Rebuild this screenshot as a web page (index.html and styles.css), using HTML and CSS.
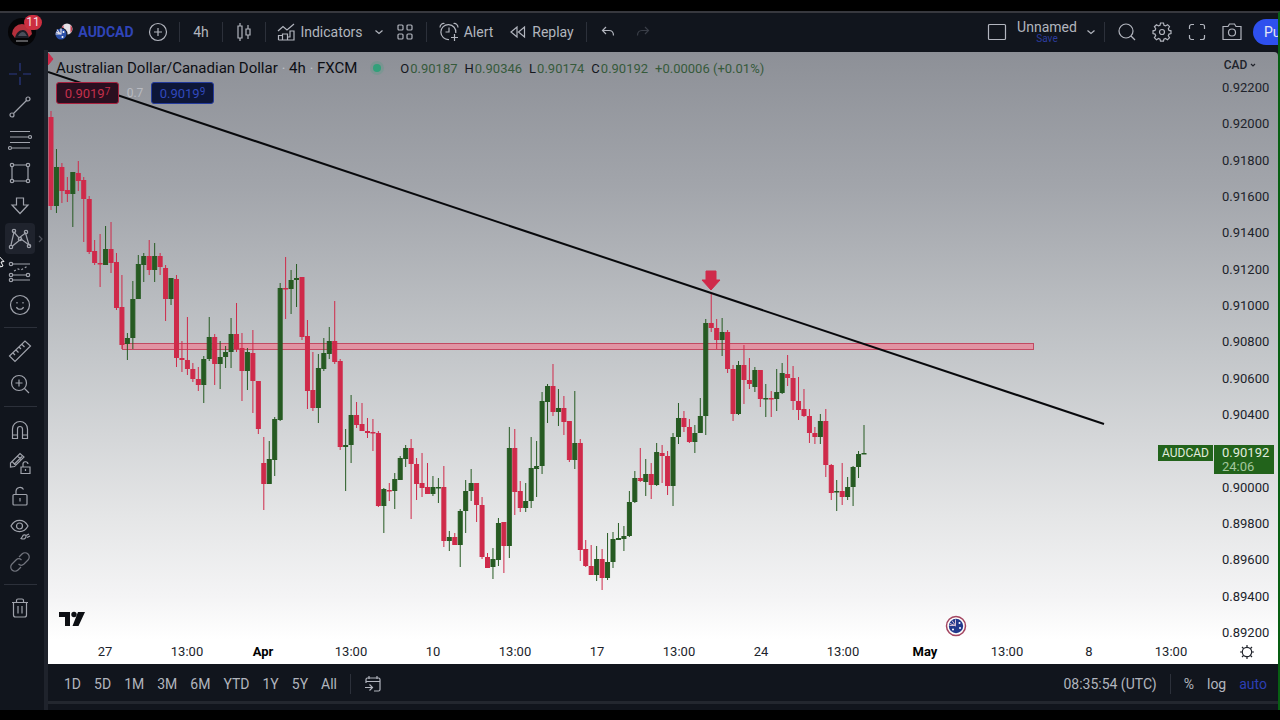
FILE: index.html
```html
<!DOCTYPE html>
<html lang="en">
<head>
    <meta charset="UTF-8">
    <meta name="viewport" content="width=device-width, initial-scale=1.0">
    <title>AUDCAD 0.90192 - Unnamed</title>
    <link rel="stylesheet" href="styles.css">
</head>
<body>
    <div class="app">
        <header class="topbar">
            <button class="avatar" aria-label="Account">
                <svg width="30" height="30" viewBox="0 0 30 30">
                    <circle cx="15" cy="15" r="14" fill="#050507"/>
                    <path d="M5 17a10 10 0 0 1 20 0l-4 4H8z" fill="#b5303c"/>
                    <path d="M8 21c1-5 4-8 8-8 3 0 5 3 6 8z" fill="#1b1d26"/>
                    <path d="M11 19c2-4 5-5 7-3l2 3z" fill="#4a4e5a"/>
                    <path d="M9 24h12" stroke="#a9a9ad" stroke-width="1"/>
                </svg>
                <span class="badge">11</span>
            </button>
            <button class="symbol">
                <svg width="20" height="20" viewBox="0 0 20 20">
                    <circle cx="13" cy="7" r="5.5" fill="#e6e2e8"/>
                    <path d="M9.500 3a5.500 5.500 0 0 0 0 8zM16.500 3a5.500 5.500 0 0 1 0 8z" fill="#c43a4c"/>
                    <circle cx="7" cy="12" r="6.500" fill="#11151d"/>
                    <circle cx="7" cy="12" r="5.500" fill="#2b50a8"/>
                    <path d="M2 10l5 2M3 7.500l3.500 5M1.500 12H7V6.500" stroke="#e3dfe8" stroke-width="1.200" fill="none"/>
                    <circle cx="9.500" cy="10" r="1" fill="#fff"/>
                    <circle cx="8.500" cy="15" r="1" fill="#fff"/>
                </svg>
                AUDCAD
            </button>
            <button class="icon-btn" aria-label="Compare symbol">
                <svg width="20" height="20" viewBox="0 0 20 20"><circle cx="10" cy="10" r="8.500"/><path d="M10 6v8M6 10h8"/></svg>
            </button>
            <span class="sep"></span>
            <button class="icon-btn">4h</button>
            <span class="sep"></span>
            <button class="icon-btn" aria-label="Candles">
                <svg width="18" height="20" viewBox="0 0 18 20"><path d="M3 4h4v12H3zM5 1v3M5 16v3M11 7h4v6h-4zM13 3v4M13 13v4"/></svg>
            </button>
            <span class="sep"></span>
            <button class="indicators">
                <svg width="18" height="18" viewBox="0 0 18 18"><path d="M1.500 17v-4.500h4V17M5.500 17v-6h5v6M10.500 14h2.500V8h4v9H1.500M1 8l5-4.500L10 7l7-6"/></svg>
                Indicators
            </button>
            <button class="arrow" aria-label="Favorite indicators">
                <svg width="10" height="6" viewBox="0 0 10 6"><path d="M1.500 1.500L5 4.500l3.500-3"/></svg>
            </button>
            <button class="icon-btn" aria-label="Templates">
                <svg width="16" height="16" viewBox="0 0 16 16"><rect x="1" y="1" width="5" height="5" rx="1"/><rect x="10" y="1" width="5" height="5" rx="1"/><rect x="1" y="10" width="5" height="5" rx="1"/><rect x="10" y="10" width="5" height="5" rx="1"/></svg>
            </button>
            <span class="sep"></span>
            <button class="alert">
                <svg width="20" height="20" viewBox="0 0 20 20"><path d="M10 17.500A7.500 7.500 0 1 1 16.800 11M10 5.500V10H6.500M1 5.500C1 3 3 1 5.500 1.500M19 5.500c0-2.500-2-4.500-4.500-4M15.500 12v7M12 15.500h7"/></svg>
                Alert
            </button>
            <button class="replay">
                <svg width="16" height="14" viewBox="0 0 16 14"><path d="M7 2v10L1 7zM14.500 2v10l-6-5z"/></svg>
                Replay
            </button>
            <span class="sep"></span>
            <button class="icon-btn" aria-label="Undo">
                <svg width="14" height="12" viewBox="0 0 14 12"><path d="M5 1L1.500 4.500 5 8M1.500 4.500H8c3 0 4.500 2 4.500 5"/></svg>
            </button>
            <button class="icon-btn redo" aria-label="Redo" disabled>
                <svg width="14" height="12" viewBox="0 0 14 12"><path d="M9 1l3.500 3.500L9 8M12.500 4.500H6c-3 0-4.500 2-4.500 5"/></svg>
            </button>

            <div class="topbar-right">
                <button class="icon-btn" aria-label="Layout">
                    <svg width="20" height="18" viewBox="0 0 20 18"><rect x="1.500" y="1.500" width="17" height="15" rx="1"/></svg>
                </button>
                <button class="layout-name">Unnamed<small>Save</small></button>
                <button class="arrow" aria-label="Manage layouts">
                    <svg width="10" height="6" viewBox="0 0 10 6"><path d="M1.500 1.500L5 4.500l3.500-3"/></svg>
                </button>
                <span class="sep"></span>
                <button class="tool-btn" aria-label="Search">
                    <svg width="20" height="20" viewBox="0 0 20 20"><circle cx="9" cy="9" r="7"/><path d="M14 14l4 4"/></svg>
                </button>
                <button class="tool-btn" aria-label="Settings">
                    <svg width="20" height="20" viewBox="0 0 20 20"><path d="M8.500 1h3l.5 2.300 1.500.6 2-1.200 2 2-1.200 2 .7 1.700 2 .4v2.800l-2 .5-.7 1.600 1.200 2-2 2.100-2-1.300-1.600.7-.4 2h-3l-.5-2-1.500-.7-2 1.300-2.100-2.100 1.300-2L3 12.100l-2-.5V8.800l2-.4.7-1.700-1.300-2 2.100-2 2 1.200L8 3.300z"/><circle cx="10" cy="10" r="2.500"/></svg>
                </button>
                <button class="tool-btn" aria-label="Fullscreen">
                    <svg width="18" height="18" viewBox="0 0 18 18"><path d="M1.500 6V3.500a2 2 0 0 1 2-2H6M12 1.500h2.500a2 2 0 0 1 2 2V6M16.500 12v2.500a2 2 0 0 1-2 2H12M6 16.500H3.500a2 2 0 0 1-2-2V12"/></svg>
                </button>
                <button class="tool-btn" aria-label="Snapshot">
                    <svg width="20" height="18" viewBox="0 0 20 18"><path d="M1 3.500h5l1.500-2.500h5L14 3.500h5V16.500H1z"/><circle cx="10" cy="9.500" r="3.500"/></svg>
                </button>
                <button class="publish">Publish</button>
            </div>
        </header>

        <nav class="sidebar">
            <button class="blue" aria-label="Cross">
                <svg width="24" height="24" viewBox="0 0 24 24"><path d="M12 1v8M12 15v8M1 12h8M15 12h8"/></svg>
            </button>
            <button aria-label="Trend line">
                <svg width="24" height="24" viewBox="0 0 24 24"><circle cx="4" cy="20" r="2"/><circle cx="20" cy="4" r="2"/><path d="M5.500 18.500l13-13"/></svg>
            </button>
            <button aria-label="Fib retracement">
                <svg width="24" height="24" viewBox="0 0 24 24"><path d="M2 3.500h20M2 9h18M2 14.500h20M4 20h18"/><circle cx="22" cy="9" r="1.500"/><circle cx="2" cy="20" r="1.500"/></svg>
            </button>
            <button aria-label="Rectangle">
                <svg width="24" height="24" viewBox="0 0 24 24"><path d="M6 4h12M6 20h12M4 6v12M20 6v12"/><circle cx="4" cy="4" r="1.700"/><circle cx="20" cy="4" r="1.700"/><circle cx="4" cy="20" r="1.700"/><circle cx="20" cy="20" r="1.700"/></svg>
            </button>
            <button aria-label="Arrow mark down">
                <svg width="24" height="24" viewBox="0 0 24 24"><path d="M8.500 4h7v7H20l-8 8.500L4 11h4.500z"/></svg>
            </button>
            <button class="active" aria-label="XABCD pattern">
                <svg width="24" height="24" viewBox="0 0 24 24"><path d="M3 18L6 5l5 6 6.500-5L21 18l-8-6-8.500 7"/><circle cx="3" cy="20" r="1.700"/><circle cx="6" cy="4" r="1.700"/><circle cx="12" cy="12" r="1.700"/><circle cx="18" cy="5" r="1.700"/><circle cx="21" cy="19" r="1.700"/></svg>
                <svg class="more" width="5" height="8" viewBox="0 0 5 8"><path d="M1 1l3 3-3 3"/></svg>
            </button>
            <button aria-label="Long position">
                <svg width="24" height="24" viewBox="0 0 24 24"><path d="M5 4h17M5 15h13M5 20h17"/><path d="M6 11l4-2 3 1 7-4" stroke-dasharray="2 2"/><circle cx="3" cy="4" r="1.700"/><circle cx="3" cy="15" r="1.700"/><circle cx="20" cy="15" r="1.700"/><circle cx="3" cy="20" r="1.700"/></svg>
            </button>
            <button aria-label="Icons">
                <svg width="24" height="24" viewBox="0 0 24 24"><circle cx="12" cy="12" r="9.500"/><path d="M9 9v1.500M15 9v1.500M8.500 14c1 3 6 3 7 0"/></svg>
            </button>
            <hr>
            <button aria-label="Measure">
                <svg width="24" height="24" viewBox="0 0 24 24"><path d="M1.500 17L17 2l5.500 5L7 22.500zM5 14l2 2M8 11l2.500 2.500M11 8l2 2M14 5.500l2.500 2.500"/></svg>
            </button>
            <button aria-label="Zoom in">
                <svg width="24" height="24" viewBox="0 0 24 24"><circle cx="11" cy="11" r="7.500"/><path d="M16.500 16.500L21 21M11 7.500v7M7.500 11h7"/></svg>
            </button>
            <hr>
            <button aria-label="Magnet">
                <svg width="24" height="24" viewBox="0 0 24 24"><path d="M4.500 20.500V11a7.500 7.500 0 0 1 15 0v9.500h-5V11a2.500 2.500 0 0 0-5 0v9.500zM4.500 17h5M14.500 17h5"/></svg>
            </button>
            <button aria-label="Stay in drawing mode">
                <svg width="24" height="24" viewBox="0 0 24 24"><path d="M2.500 16v-4L12 2.500l4 3.500-9.500 9.500zM4.500 11l3.500 3.500M6 13.500l8-8M9.500 5l4 4"/><path d="M13 16h9v6.500h-9zM15 16v-2.500a2.500 2.500 0 0 1 5-.5M17.500 18v2"/></svg>
            </button>
            <button aria-label="Lock all drawings">
                <svg width="24" height="24" viewBox="0 0 24 24"><rect x="5" y="10.500" width="14" height="10.500" rx="1"/><path d="M8 10.500V7a4 4 0 0 1 7.500-1.500M12 14v3.500"/></svg>
            </button>
            <button aria-label="Hide all drawings">
                <svg width="24" height="24" viewBox="0 0 24 24"><path d="M3 9c4-7.500 13-7.500 17 0-4 7.500-13 7.500-17 0z"/><circle cx="11.500" cy="9" r="3"/><path d="M13 21.500c2 1 5 .5 5-2s-3-2-3.500 0zM18 18.500l3-1.500M19 20.500l3-1.500"/></svg>
            </button>
            <button class="dim" aria-label="Sync drawings">
                <svg width="24" height="24" viewBox="0 0 24 24"><path d="M11 7l3-3a4 4 0 0 1 6 6l-4 4a4 4 0 0 1-5.500 0M13 17l-3 3a4 4 0 0 1-6-6l4-4a4 4 0 0 1 5.500 0"/></svg>
            </button>
            <hr>
            <button aria-label="Remove drawings">
                <svg width="24" height="24" viewBox="0 0 24 24"><path d="M4 6.500h16M5.500 6.500V19a2 2 0 0 0 2 2h9a2 2 0 0 0 2-2V6.500M8.500 6.500V4.500a1.500 1.500 0 0 1 1.500-1.500h4a1.500 1.500 0 0 1 1.500 1.500v2M10 10v7.500M14 10v7.500"/></svg>
            </button>
            <svg class="cursor" width="10" height="16" viewBox="0 0 10 16"><path d="M-5-2L4 7.500 1 8l2 4-2.500 1-2-4" fill="#11151d" stroke="#fff"/></svg>
        </nav>

        <main class="chart">
            <div class="pane">
                <svg class="plot" id="plot"></svg>

                <div class="legend">
                    <div class="legend-row">
                        <h1>Australian Dollar/Canadian Dollar <i>·</i> 4h <i>·</i> FXCM</h1>
                        <span class="status"></span>
                        <p class="ohlc">
                            <span><b>O</b>0.90187</span>
                            <span><b>H</b>0.90346</span>
                            <span><b>L</b>0.90174</span>
                            <span><b>C</b>0.90192</span>
                            <span>+0.00006 (+0.01%)</span>
                        </p>
                    </div>
                    <div class="quote-row">
                        <button class="sell">0.9019<sup>7</sup></button>
                        <span class="spread">0.7</span>
                        <button class="buy">0.9019<sup>9</sup></button>
                    </div>
                </div>

                <svg class="logo" width="28" height="16" viewBox="0 0 28 16"><path d="M0 1h11v14H6V6H0zM19.500 15h-6L19 1h7z"/><circle cx="15" cy="3.500" r="2.700"/></svg>
                <svg class="event" width="22" height="22" viewBox="0 0 22 22">
                    <circle cx="11" cy="11" r="9.500" fill="#fff" stroke="#a34560" stroke-width="1.500"/>
                    <circle cx="11" cy="11" r="7.200" fill="#22398c"/>
                    <path d="M5 8.500l6 2.500M7 5.500l3.500 5M4.500 10.500h6V4.500" stroke="#d3bfd4" fill="none"/>
                    <circle cx="14.500" cy="8" r="1" fill="#fff"/><circle cx="15" cy="13" r="1" fill="#fff"/><circle cx="8" cy="14.500" r="1" fill="#fff"/>
                </svg>
            </div>

            <div class="price-axis">
                <button class="currency">CAD
                    <svg width="6" height="4" viewBox="0 0 6 4"><path d="M1 1l2 2 2-2"/></svg>
                </button>
                <ul>
                    <li>0.92200</li>
                    <li>0.92000</li>
                    <li>0.91800</li>
                    <li>0.91600</li>
                    <li>0.91400</li>
                    <li>0.91200</li>
                    <li>0.91000</li>
                    <li>0.90800</li>
                    <li>0.90600</li>
                    <li>0.90400</li>
                    <li></li>
                    <li>0.90000</li>
                    <li>0.89800</li>
                    <li>0.89600</li>
                    <li>0.89400</li>
                    <li>0.89200</li>
                </ul>
                <div class="last-price">
                    <span class="last-symbol">AUDCAD</span>
                    <span class="last-value">0.90192<br><em>24:06</em></span>
                </div>
            </div>

            <div class="time-axis">
                <span>27</span>
                <span>13:00</span>
                <span class="month weekend">Apr</span>
                <span>13:00</span>
                <span>10</span>
                <span>13:00</span>
                <span>17</span>
                <span>13:00</span>
                <span>24</span>
                <span>13:00</span>
                <span class="month">May</span>
                <span>13:00</span>
                <span>8</span>
                <span>13:00</span>
            </div>
            <button class="axis-settings" aria-label="Scale settings">
                <svg width="16" height="16" viewBox="0 0 16 16"><circle cx="8" cy="8" r="4.700"/><path d="M8 1v2M8 13v2M1 8h2M13 8h2M3 3l1.500 1.500M11.500 11.500L13 13M3 13l1.500-1.500M11.500 4.500L13 3"/></svg>
            </button>
        </main>

        <footer class="bottombar">
            <button>1D</button>
            <button>5D</button>
            <button>1M</button>
            <button>3M</button>
            <button>6M</button>
            <button>YTD</button>
            <button>1Y</button>
            <button>5Y</button>
            <button>All</button>
            <span class="sep"></span>
            <button aria-label="Go to date">
                <svg width="18" height="18" viewBox="0 0 18 18"><path d="M2 8V4.500a1.500 1.500 0 0 1 1.500-1.500h11A1.500 1.500 0 0 1 16 4.500v10a1.500 1.500 0 0 1-1.500 1.500H10M2 6.500h14M5 1v3M13 1v3M1 12.500h7M5.500 9.500l3 3-3 3"/></svg>
            </button>
            <div class="bottombar-right">
                <button>08:35:54 (UTC)</button>
                <span class="sep"></span>
                <button>%</button>
                <button>log</button>
                <button class="blue">auto</button>
            </div>
        </footer>
        <div class="panel-edge"></div>
    </div>
    <script src="chart.js"></script>
</body>
</html>
```
FILE: styles.css
```css
* {
    box-sizing: border-box;
}

body {
    margin: 0;
    height: 100vh;
    padding: 11px 0 10px;
    background-color: #000;
    color: #b2b5be;
    font-family: Roboto, "Liberation Sans", sans-serif;
    font-size: 14px;
    overflow: hidden;
}

button {
    display: flex;
    align-items: center;
    justify-content: center;
    padding: 0;
    border: none;
    background: none;
    color: inherit;
    font: inherit;
    white-space: nowrap;
    cursor: pointer;
}

button svg {
    flex: none;
    fill: none;
    stroke: currentColor;
    stroke-width: 1.2;
}

.app {
    display: grid;
    grid-template-columns: 48px 1fr;
    grid-template-rows: 37px 1fr 37px 9px;
    height: 100%;
    border-top: 2px solid #37383e;
    border-right: 2px solid #075f12;
    background-color: #11151d;
}

/* top toolbar */
.topbar {
    grid-column: 1 / 3;
    display: flex;
    align-items: center;
    overflow: hidden;
}

.topbar button {
    flex: none;
    height: 37px;
}

.topbar .avatar {
    position: relative;
    width: 44px;
}

.avatar svg {
    stroke: none;
}

.badge {
    position: absolute;
    top: 2px;
    right: 2px;
    width: 18px;
    height: 15px;
    border-radius: 8px;
    background-color: #cc2f40;
    color: #f3dfe2;
    font-size: 12px;
    line-height: 15px;
}

.topbar .symbol {
    width: 100px;
    gap: 4px;
    color: #2f44b8;
    font-weight: bold;
}

.symbol svg {
    stroke: none;
}

.icon-btn {
    width: 28px;
}

.indicators {
    width: 94px;
    gap: 5px;
}

.arrow {
    width: 24px;
}

.alert {
    width: 64px;
    gap: 5px;
}

.replay {
    width: 74px;
    margin-left: 7px;
    gap: 6px;
}

.redo {
    margin-left: 7px;
    color: #3a3e48;
}

.sep {
    flex: none;
    width: 1px;
    height: 20px;
    margin: 0 7px;
    background-color: #2c303a;
}

.topbar-right {
    display: flex;
    align-items: center;
    margin-left: auto;
}

.topbar-right .sep {
    margin: 0 4px 0 1px;
}

.topbar .layout-name {
    flex-direction: column;
    width: 64px;
    margin-left: 4px;
    font-size: 14px;
    line-height: 14px;
}

.layout-name small {
    color: #2c3c9c;
    font-size: 10px;
    line-height: 10px;
}

.tool-btn {
    width: 35px;
}

.topbar .publish {
    justify-content: flex-start;
    width: 25px;
    height: 26px;
    margin-left: 4px;
    padding-left: 11px;
    border-radius: 13px 0 0 13px;
    background-color: #2e50ee;
    color: #e3e6f5;
    overflow: hidden;
}

/* drawing tools */
.sidebar {
    position: relative;
    grid-row: 2 / 5;
    display: flex;
    flex-direction: column;
    padding: 7px 6px 0 2px;
    border-right: 4px solid #1f232c;
}

.sidebar button {
    position: relative;
    height: 33px;
    flex: none;
    color: #a0a3ac;
}

.sidebar .blue {
    color: #2c3a86;
}

.sidebar .dim {
    color: #72757e;
}

.sidebar .active::before {
    content: "";
    position: absolute;
    inset: 1px 3px;
    border-radius: 4px;
    background-color: #1f232d;
}

.active svg {
    position: relative;
}

.sidebar .more {
    position: absolute;
    right: -5px;
    color: #50535d;
}

.sidebar hr {
    width: 33px;
    height: 1px;
    margin: 6px auto 6px 2px;
    border: none;
    background-color: #2c303a;
}

.cursor {
    position: absolute;
    top: 204px;
    left: 0;
}

/* chart */
.chart {
    display: grid;
    grid-template-columns: 1fr 62px;
    grid-template-rows: 1fr 25px;
    margin-top: 2px;
    border-radius: 0 4px 0 0;
    background: linear-gradient(#8d9097, #a2a5ab 22%, #c4c7ca 50%, #e5e6e7 76%, #f4f4f5 89%, #fff 96%);
    color: #20232b;
    font-size: 13px;
    overflow: hidden;
}

.pane {
    position: relative;
    overflow: hidden;
}

.plot {
    display: block;
    width: 100%;
    height: 100%;
}

.trend {
    stroke: #08090c;
    stroke-width: 2;
}

.zone {
    fill: rgba(255, 100, 125, 0.5);
    stroke: #c24a62;
}

.up {
    fill: #265a22;
    stroke: #265a22;
}

.down {
    fill: #cf2a4a;
    stroke: #cf2a4a;
}

.legend {
    position: absolute;
    top: 6px;
    left: 8px;
}

.legend-row,
.quote-row {
    display: flex;
    align-items: center;
}

.legend h1 {
    margin: 0;
    color: #0c0e13;
    font-size: 15px;
    font-weight: normal;
    line-height: 20px;
}

.legend i {
    color: #c0c2c7;
}

.status {
    width: 8px;
    height: 8px;
    margin: 0 19px 0 16px;
    border-radius: 50%;
    background-color: #32a07a;
    box-shadow: 0 0 0 3px rgba(50, 160, 122, 0.2);
}

.ohlc {
    display: flex;
    gap: 7px;
    margin: 0;
    color: #365a3b;
    font-size: 13px;
}

.ohlc b {
    margin-right: 1px;
    color: #15171e;
    font-weight: normal;
}

.quote-row {
    margin-top: 4px;
}

.sell,
.buy {
    width: 63px;
    height: 22px;
    border: 1px solid #a8213f;
    border-radius: 3px;
    background-color: #2a0f20;
    color: #c4304c;
    font-size: 13px;
}

.buy {
    border-color: #233a9c;
    background-color: #0d1638;
    color: #3249bd;
}

.quote-row sup {
    align-self: flex-start;
    margin-top: 3px;
    font-size: 10px;
    line-height: 12px;
}

.spread {
    width: 32px;
    color: #b9bbc1;
    font-size: 12px;
    text-align: center;
}

.logo {
    position: absolute;
    bottom: 12px;
    left: 11px;
    fill: #0d0f14;
}

.event {
    position: absolute;
    bottom: 2px;
    left: 897px;
}

.price-axis {
    position: relative;
    display: flex;
    flex-direction: column;
}

.currency {
    gap: 3px;
    width: 48px;
    height: 26px;
    font-size: 12px;
    font-weight: 500;
}

.price-axis ul {
    display: flex;
    flex: 1;
    flex-direction: column;
    justify-content: space-between;
    margin: 2px 0 -2px;
    padding: 0 0 0 6px;
    list-style: none;
}

.price-axis li {
    height: 16px;
    line-height: 16px;
}

.last-price {
    position: absolute;
    top: 393px;
    right: 4px;
    display: flex;
    align-items: flex-start;
    color: #e0ebdd;
    line-height: 14px;
}

.last-symbol {
    height: 16px;
    margin-right: 1px;
    padding: 1px 4px;
    background-color: #22631b;
    font-size: 12px;
}

.last-value {
    width: 60px;
    height: 29px;
    padding: 1px 8px;
    background-color: #22631b;
}

.last-value em {
    color: #a3c79d;
    font-style: normal;
}

.time-axis {
    display: grid;
    grid-template-columns: repeat(14, 1fr);
    padding: 0 4px 0 16px;
    line-height: 25px;
    text-align: center;
}

.time-axis .month {
    color: #000;
    font-weight: bold;
}

/* the month opened on a weekend, so its mark sits before the grid step */
.time-axis .weekend {
    padding-right: 12px;
}

/* range bar */
.bottombar {
    display: flex;
    align-items: center;
    padding: 2px 11px 0 16px;
    gap: 13px;
}

.bottombar .sep {
    margin: 0;
}

.bottombar-right {
    display: flex;
    align-items: center;
    margin-left: auto;
    gap: 13px;
}

.bottombar .blue {
    color: #2c3fb4;
}

.panel-edge {
    grid-column: 2;
    border-top: 3px solid #23272f;
}
```
FILE: chart.js
```js
// direction, then the y of high, body top, body bottom and low
const candles = `
r 111 117 206 210, g 149 167 206 213, r 163 167 191 203, r 177 190 194 202, g 172 172 194 227,
r 161 173 181 191, r 177 180 199 242, r 196 199 252 254, r 240 251 263 265, r 234 263 264 287,
g 226 249 265 265, r 222 249 263 273, r 253 262 308 310, r 275 307 345 349, g 333 338 344 360,
g 281 299 338 349, g 255 264 299 299, g 253 256 265 282, r 240 256 270 275, g 243 256 270 282,
r 253 256 267 275, r 265 268 299 321, g 278 278 299 305, r 275 279 358 367, r 341 358 360 372,
r 317 360 369 375, r 363 369 379 382, r 367 379 385 391, g 356 359 385 403, g 317 337 359 361,
r 334 337 364 385, g 341 357 364 389, g 346 352 357 368, g 318 334 352 368, r 303 334 349 352,
r 333 348 371 401, g 348 352 371 390, r 330 353 381 413, r 381 381 429 434, r 437 463 484 510,
g 441 459 484 484, g 417 419 460 476, g 283 288 420 421, r 257 288 289 319, g 270 280 289 314,
g 264 278 280 307, r 277 277 337 340, r 320 336 391 409, r 352 390 408 411, g 354 368 408 423,
g 338 353 369 371, g 327 341 354 359, r 301 341 362 364, r 359 361 447 450, g 429 445 447 491,
g 395 415 445 463, r 402 415 425 428, r 403 424 431 431, r 418 431 433 438, r 419 432 433 451,
r 431 433 506 507, g 488 489 506 533, r 483 490 491 501, g 473 479 491 509, g 456 458 480 480,
g 445 448 459 467, r 439 448 464 519, r 458 464 484 500, r 453 483 488 497, r 463 487 494 494,
g 476 487 494 496, g 478 487 488 503, r 466 487 541 547, g 531 537 541 551, r 533 537 545 545,
g 509 511 545 567, g 480 491 511 533, g 469 483 491 501, r 483 483 505 522, r 497 505 557 559,
r 553 557 568 568, g 548 559 567 579, g 518 523 560 566, r 522 522 546 573, g 427 448 546 558,
r 429 448 492 515, r 481 491 508 512, g 483 501 508 512, g 437 468 501 508, g 441 466 469 497,
g 392 401 466 474, g 384 386 402 423, r 364 386 412 416, g 389 408 412 426, r 396 408 422 435,
r 421 421 460 462, g 391 443 460 469, r 439 443 550 561, r 540 549 566 567, r 545 566 575 575,
g 546 559 575 581, r 549 559 578 590, g 533 562 578 580, g 532 539 562 568, g 523 538 540 540,
g 526 536 539 551, g 491 502 536 537, g 471 478 502 503, r 448 478 481 482, g 459 474 482 496,
r 463 474 485 499, g 443 452 485 486, r 445 453 456 483, r 451 456 486 495, g 433 437 486 506,
g 403 418 437 444, r 411 418 427 432, r 419 427 442 443, g 425 433 442 453, g 398 416 433 433,
g 319 323 416 435, r 293 323 328 332, r 319 328 340 349, g 318 332 340 356, r 330 332 369 373,
r 365 369 414 421, g 361 365 414 415, r 345 365 380 404, r 358 380 384 389, g 367 370 387 392,
r 370 370 399 407, g 384 398 399 417, r 391 398 399 417, g 369 392 399 411, g 363 373 393 394,
r 355 374 378 386, r 366 378 401 410, r 377 401 410 420, r 389 409 416 417, r 409 416 433 443,
r 427 433 437 444, g 414 421 437 444, r 409 421 465 477, r 464 465 493 500, g 480 491 492 511,
r 463 491 497 505, g 477 487 497 500, g 466 467 487 506, g 451 454 467 478, g 425 453 454 454
`.trim().split(',');

const firstX = 51;
const lastX = 864;
const step = (lastX - firstX) / (candles.length - 1);

let shapes = '<rect class="zone" x="122.5" y="343.5" width="911" height="6"/>';

candles.forEach((row, i) => {
    const [dir, high, top, bottom, low] = row.trim().split(' ');
    const x = firstX + i * step;
    const name = dir === 'g' ? 'up' : 'down';
    shapes += `<path class="${name}" stroke-width="1" d="M${x} ${high}V${low}"/>`;
    shapes += `<rect class="${name}" stroke="none" x="${x - 2}" y="${+top + 0.5}" width="4" height="${Math.max(bottom - top - 1, 0.5)}"/>`;
});

shapes += '<path class="down" d="M48 53v12l5-6z"/>';
shapes += '<path class="down" d="M706 271h10v9h4l-9 10-9-10h4z"/>';
shapes += '<path class="trend" d="M48 72L1104 424"/>';

// coordinates above are in window space, the pane starts at 48, 52
document.getElementById('plot').innerHTML = `<g transform="translate(-48 -52)">${shapes}</g>`;
```
